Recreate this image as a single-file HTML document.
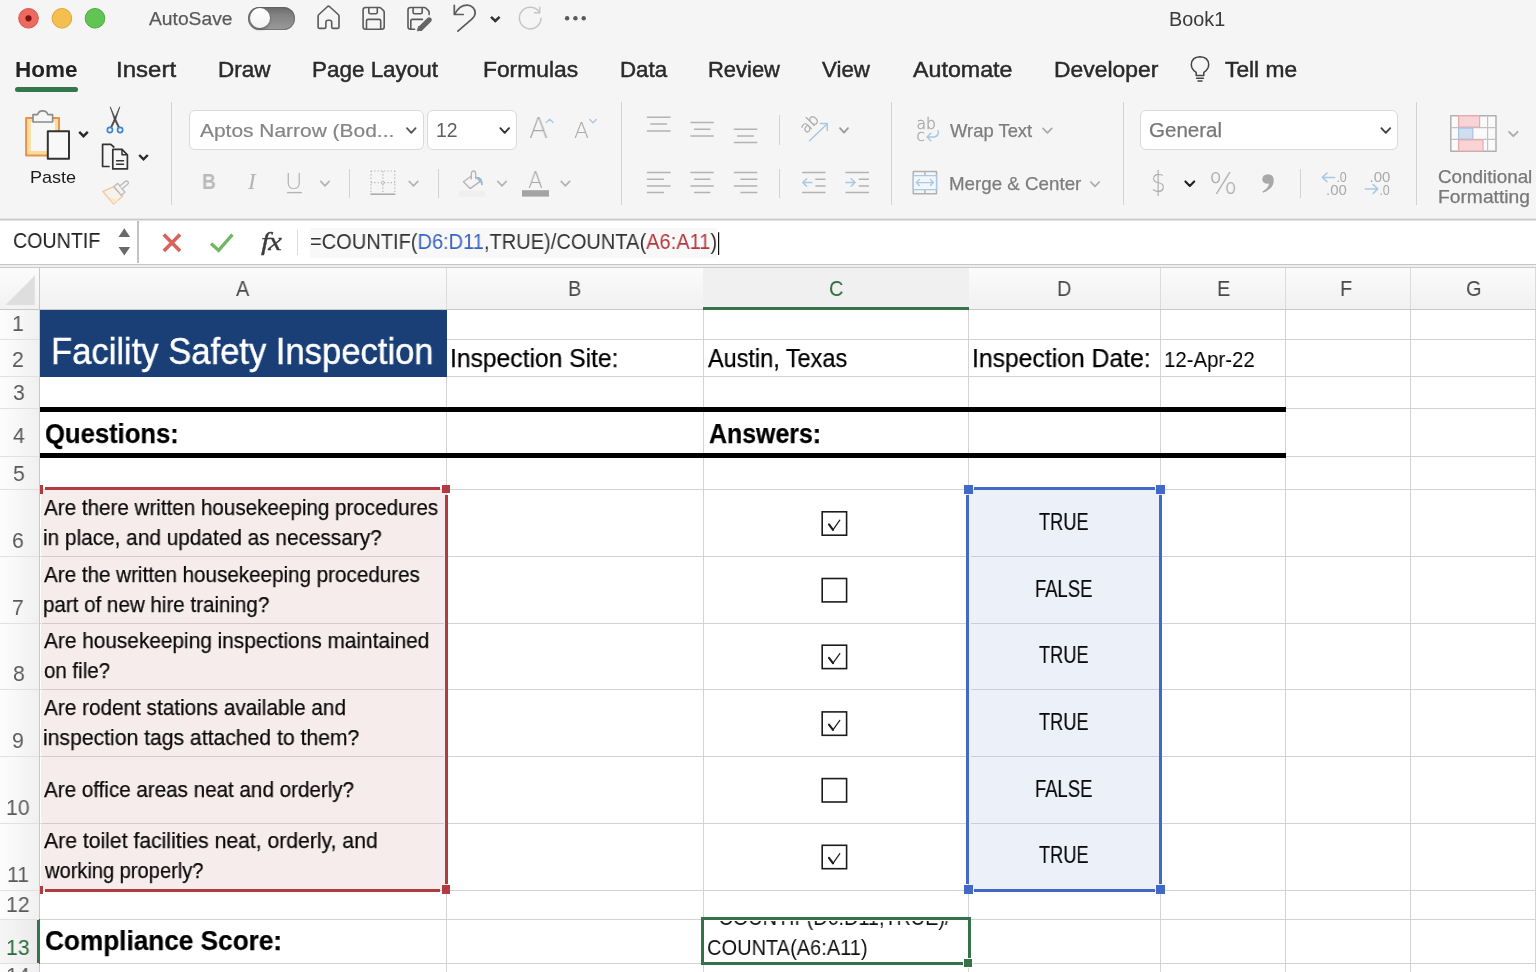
<!DOCTYPE html>
<html lang="en"><head><meta charset="utf-8"><title>Book1</title>
<style>
html,body{margin:0;padding:0;background:#fff;}
body{width:1536px;height:972px;overflow:hidden;font-family:"Liberation Sans",sans-serif;}
#app{position:relative;width:1536px;height:972px;overflow:hidden;background:#fff;}
.t{will-change:transform;position:absolute;white-space:pre;line-height:1;transform-origin:0 0;display:block;}
.t i{font-style:italic;}
.abs{position:absolute;}
.hl{position:absolute;height:1px;background:#d3d3d3;}
.vl{position:absolute;width:1px;background:#d3d3d3;}
.dv{position:absolute;width:1px;background:#d2d2d2;}
svg{position:absolute;overflow:visible;}
.box{position:absolute;background:#fff;border:1px solid #dadada;border-radius:6px;box-sizing:border-box;}
</style></head>
<body>
<div id="app">
<!-- window chrome: title bar + ribbon -->
<div class="abs" style="left:0;top:0;width:1536px;height:219px;background:#f5f5f5"></div>
<div class="abs" style="left:0;top:218px;width:1536px;height:1px;background:#e6e6e6"></div>
<div class="abs" style="left:0;top:219px;width:1536px;height:1px;background:#c9c9c9"></div>
<div class="abs" style="left:0;top:220px;width:1536px;height:1px;background:#e2e2e2;z-index:1"></div>
<!-- traffic lights -->
<svg style="left:0;top:0" width="120" height="40" viewBox="0 0 120 40">
  <circle cx="28.5" cy="18.3" r="9.8" fill="#ec6a5f" stroke="#d9544a" stroke-width="1"/>
  <circle cx="28.5" cy="18.3" r="3.1" fill="#7c1410"/>
  <circle cx="61.9" cy="18.3" r="9.8" fill="#f5bf4f" stroke="#dea63a" stroke-width="1"/>
  <circle cx="95" cy="18.3" r="9.8" fill="#61c554" stroke="#4daa3f" stroke-width="1"/>
</svg>
<!-- autosave toggle -->
<div class="abs" style="left:248.4px;top:6.5px;width:46.8px;height:23.5px;border-radius:12px;background:linear-gradient(#686868,#828282 35%,#9a9a9a);box-shadow:inset 0 0 0 1px rgba(90,90,90,.55)"></div>
<div class="abs" style="left:249.7px;top:7.8px;width:20.6px;height:20.6px;border-radius:50%;background:linear-gradient(#ffffff,#f3f3f3);box-shadow:0 1.5px 2.5px rgba(0,0,0,.35)"></div>
<!-- quick access icons -->
<svg style="left:310px;top:0" width="290" height="40" viewBox="310 0 290 40" fill="none" stroke="#5b5b5b" stroke-width="1.7" stroke-linejoin="round" stroke-linecap="round">
  <!-- home -->
  <path d="M318.1 16.2 Q318.1 15.2 318.9 14.5 L327.6 6.5 Q328.5 5.8 329.4 6.5 L338.2 14.5 Q339 15.2 339 16.2 V26.9 Q339 28.4 337.5 28.4 H333.2 Q331.7 28.4 331.7 26.9 V22.4 Q331.7 20.2 329.5 20.2 H328.1 Q325.9 20.2 325.9 22.4 V26.9 Q325.9 28.4 324.4 28.4 H319.6 Q318.1 28.4 318.1 26.9 Z" stroke-width="1.6"/>
  <!-- save -->
  <path d="M365.6 7.5 H379.4 Q380.4 7.5 381.1 8.2 L383.5 10.6 Q384.2 11.3 384.2 12.3 V26.7 Q384.2 29.2 381.7 29.2 H365.6 Q363.1 29.2 363.1 26.7 V10 Q363.1 7.5 365.6 7.5 Z" stroke-width="1.6"/>
  <path d="M368.8 7.7 V12.2 Q368.8 13.7 370.3 13.7 H375.8 Q377.3 13.7 377.3 12.2 V7.7" stroke-width="1.6"/>
  <path d="M366.5 29 V20.9 Q366.5 19.4 368 19.4 H379.2 Q380.7 19.4 380.7 20.9 V29" stroke-width="1.6"/>
  <!-- save as (edit) -->
  <path d="M414.6 29.2 H410.5 Q408 29.2 408 26.7 V10 Q408 7.5 410.5 7.5 H424.3 Q425.3 7.5 426 8.2 L428.4 10.6 Q429.1 11.3 429.1 12.3 V14.6" stroke-width="1.6"/>
  <path d="M413.1 7.7 V12.2 Q413.1 13.7 414.6 13.7 H420.7 Q422.2 13.7 422.2 12.2 V7.7" stroke-width="1.6"/>
  <path d="M410.8 29 V20.9 Q410.8 19.4 412.3 19.4 H422.4" stroke-width="1.6"/>
  <path d="M429.2 19.9 L420.6 28.3" stroke="#666" stroke-width="5.2"/>
  <path d="M418.6 26.6 L417.3 30.4 Q417.2 31 417.8 30.9 L421.8 29.9 Z" fill="#666" stroke="#666" stroke-width="0.8"/>
  <!-- undo -->
  <path d="M454.3 5.4 V14.5 H463.2" stroke-width="1.7"/>
  <path d="M454.8 14 C457.5 9 462 5.2 467.2 5.2 C472 5.2 475.2 9 475.2 12.8 C475.2 15.6 473.8 17.4 471.8 19.2 L457.9 31.2" stroke-width="1.7"/>
  <!-- chevron -->
  <path d="M491 16.8 L495.3 21 L499.6 16.8" stroke="#333" stroke-width="2.5" stroke-linecap="butt" stroke-linejoin="miter"/>
  <!-- redo (disabled) -->
  <path d="M539.7 7.3 V12.7 H534.4" stroke="#c6c6c6" stroke-width="1.5"/>
  <path d="M539.6 12.7 A10.8 10.8 0 1 0 541 18.3" stroke="#c6c6c6" stroke-width="1.5"/>
  <!-- dots -->
  <g fill="#595959" stroke="none"><circle cx="567.1" cy="18.3" r="2.2"/><circle cx="575.4" cy="18.3" r="2.2"/><circle cx="583.7" cy="18.3" r="2.2"/></g>
</svg>
<!-- Home underline -->
<div class="abs" style="left:15px;top:86.6px;width:63.2px;height:5px;border-radius:2.5px;background:#34774a"></div>
<!-- lightbulb -->
<svg style="left:1185px;top:52px" width="30" height="34" viewBox="1185 52 30 34" fill="none" stroke="#444" stroke-width="1.5" stroke-linecap="round" stroke-linejoin="round">
  <path d="M1196.2 75.4 V72.4 Q1191.3 69.3 1191.3 64.6 Q1191.6 57.2 1200 56.8 Q1208.4 57.2 1208.7 64.6 Q1208.7 69.3 1203.8 72.4 V75.4 Z"/>
  <path d="M1196.6 78.2 H1203.4"/><path d="M1198 81 H1202"/>
</svg>
<!-- ribbon dividers -->
<div class="dv" style="left:170.6px;top:102px;height:103px"></div>
<div class="dv" style="left:621px;top:102px;height:103px"></div>
<div class="dv" style="left:891.4px;top:102px;height:103px"></div>
<div class="dv" style="left:1123.2px;top:102px;height:103px"></div>
<div class="dv" style="left:1416px;top:102px;height:103px"></div>
<div class="dv" style="left:349.2px;top:168.6px;height:29.4px"></div>
<div class="dv" style="left:438px;top:168.6px;height:29.4px"></div>
<div class="dv" style="left:779.4px;top:115.3px;height:29.6px"></div>
<div class="dv" style="left:779.4px;top:168.6px;height:29.4px"></div>
<div class="dv" style="left:1300.2px;top:168.6px;height:29.4px"></div>
<!-- dropdown boxes -->
<div class="box" style="left:188.5px;top:110.2px;width:235px;height:39.4px"></div>
<div class="box" style="left:427px;top:110.2px;width:90px;height:39.4px"></div>
<div class="box" style="left:1140.2px;top:110.2px;width:257.6px;height:39.4px"></div>
<!-- ribbon icons -->
<svg style="left:0;top:95px" width="1536" height="125" viewBox="0 95 1536 125" fill="none" stroke-linecap="round" stroke-linejoin="round">
  <!-- paste clipboard -->
  <path d="M26.1 118 H59 V155.6 H26.1 Z" fill="#f9dc9a" stroke="#e8934a" stroke-width="2"/>
  <path d="M30.8 121.6 H55 V151 H30.8 Z" fill="#f7f7f7" stroke="none"/>
  <path d="M33 122 V114.6 H37.6 Q38.6 110.9 42.7 110.9 Q46.8 110.9 47.8 114.6 H52.6 V122 Z" fill="#f6f6f6" stroke="#8a8a8a" stroke-width="1.6"/>
  <path d="M47.8 131.2 H69 V158.8 H47.8 Z" fill="#f8f8f8" stroke="#333" stroke-width="2"/>
  <path d="M79.2 131.8 L83.5 136.2 L87.8 131.8" stroke="#2a2a2a" stroke-width="2.4" stroke-linecap="butt" stroke-linejoin="miter"/>
  <!-- scissors -->
  <path d="M110.4 107.2 L115.4 118.6 L119.6 127.4 L118.4 127.8 L114.4 119.6 Z" fill="#444" stroke="#444" stroke-width="0.7"/>
  <path d="M119.6 107.2 L114.6 118.6 L110.4 127.4 L111.6 127.8 L115.6 119.6 Z" fill="#444" stroke="#444" stroke-width="0.7"/>
  <circle cx="109.9" cy="130" r="2.6" stroke="#3c86d2" stroke-width="1.7"/>
  <circle cx="120.1" cy="130" r="2.6" stroke="#3c86d2" stroke-width="1.7"/>
  <!-- copy -->
  <path d="M109 166.5 H102.6 V144.4 H110.8 L113.8 147" stroke="#333" stroke-width="1.7"/>
  <path d="M112.8 149.4 H122 L127.4 154.8 V168.9 H112.8 Z" fill="#f7f7f7" stroke="#333" stroke-width="1.7"/>
  <path d="M122 149.6 V154.8 H127.2" stroke="#333" stroke-width="1.5"/>
  <path d="M116.5 160.7 H123.6 M116.5 164.2 H123.6" stroke="#333" stroke-width="1.4"/>
  <path d="M139.2 155 L143.5 159.4 L147.8 155" stroke="#2a2a2a" stroke-width="2.4" stroke-linecap="butt" stroke-linejoin="miter"/>
  <!-- format painter (disabled) -->
  <path d="M102.9 191.5 L113.2 186.8 L122.6 196.3 L113.7 204 Z" fill="#f8f2ed" stroke="#f3c8a6" stroke-width="1.4"/>
  <path d="M108.2 196.6 L118.4 200 L113.7 203.8 Z" fill="#fbe9c8" stroke="none"/>
  <path d="M113.9 186.5 L117.7 183.4 L124.9 192.3 L121.2 195.3 Z" fill="#f4f4f4" stroke="#bcbcbc" stroke-width="1.4"/>
  <path d="M119.9 186 L125.4 181.4 Q126.9 180.4 128 181.7 Q129 183.1 127.7 184.2 L122.2 188.8" fill="#f4f4f4" stroke="#bcbcbc" stroke-width="1.4"/>
  <!-- font box chevrons -->
  <path d="M407 128.2 L411.3 132.8 L415.6 128.2" stroke="#555" stroke-width="1.8"/>
  <path d="M500.4 128.2 L504.7 132.8 L509 128.2" stroke="#333" stroke-width="1.9"/>
  <path d="M1381.4 128.2 L1385.8 132.8 L1390.2 128.2" stroke="#444" stroke-width="1.9"/>
  <!-- grow/shrink carets -->
  <path d="M546.2 122.4 L549.7 119.2 L553.2 122.4" stroke="#a9c8e6" stroke-width="1.4"/>
  <path d="M589.6 119.4 L593 122.8 L596.4 119.4" stroke="#a9c8e6" stroke-width="1.4"/>
  <!-- U underline + chevron -->
  <path d="M287 192.6 H301.9" stroke="#b4b4b4" stroke-width="1.4" stroke-linecap="butt"/>
  <path d="M320.8 181.4 L325 185.8 L329.2 181.4" stroke="#b5b5b5" stroke-width="1.8"/>
  <!-- borders icon -->
  <g stroke="#b5b5b5" stroke-width="1.2" stroke-dasharray="1.2 2.1" stroke-linecap="butt">
    <path d="M371 171 H395"/><path d="M371 171 V193"/><path d="M394.8 171 V193"/><path d="M382.9 171 V193"/><path d="M371 182.6 H395"/>
  </g>
  <path d="M370.4 194.2 H395.3" stroke="#adadad" stroke-width="1.6" stroke-linecap="butt"/>
  <circle cx="382.9" cy="182.6" r="1.5" stroke="#b5b5b5" stroke-width="0.9" fill="#f5f5f5"/>
  <path d="M409.2 181.4 L413.5 185.8 L417.8 181.4" stroke="#b5b5b5" stroke-width="1.8"/>
  <!-- fill bucket -->
  <path d="M471.3 179 V174 Q471.4 171 473.6 171 Q475.7 171 475.7 174 V178.6" stroke="#b5b5b5" stroke-width="1.3"/>
  <path d="M471.2 176.2 L463.4 181.8 L470.2 188.6 L480.2 181.4 L475.8 177" stroke="#b5b5b5" stroke-width="1.4"/>
  <path d="M477.2 177.4 Q482 176.6 482.4 184.6 Q482 186.6 481 182.6 Q480.2 179 477.2 177.4 Z" fill="#8fb4de" stroke="#8fb4de" stroke-width="0.8"/>
  <rect x="459" y="190.6" width="26.2" height="6" fill="#efefef" stroke="none"/>
  <path d="M497.8 181.4 L502 185.8 L506.2 181.4" stroke="#b5b5b5" stroke-width="1.8"/>
  <!-- font colour bar -->
  <rect x="522" y="190.2" width="27" height="6.4" fill="#a3a3a3" stroke="none"/>
  <path d="M561.2 181.4 L565.4 185.8 L569.6 181.4" stroke="#b5b5b5" stroke-width="1.8"/>
  <!-- alignment icons -->
  <g stroke="#b3b3b3" stroke-width="1.5" stroke-linecap="butt">
    <path d="M646.9 117.3 H670.6 M650.3 124.1 H666.9 M646.9 130.9 H670.6"/>
    <path d="M690.4 122.4 H713.8 M694 129.2 H710.4 M690.4 136 H713.8"/>
    <path d="M733.8 129.2 H757.3 M737.1 136 H753.9 M733.8 142.5 H757.3"/>
    <path d="M646.9 172.5 H670.6 M646.9 179.2 H663.9 M646.9 185.9 H670.6 M646.9 192.6 H663.9"/>
    <path d="M690.4 172.5 H713.8 M694 179.2 H710.4 M690.4 185.9 H713.8 M694 192.6 H710.4"/>
    <path d="M733.8 172.5 H757.3 M740.4 179.2 H757.3 M733.8 185.9 H757.3 M740.4 192.6 H757.3"/>
    <path d="M802.1 172.5 H825.5 M815.3 179.2 H825.5 M815.3 185.9 H825.5 M802.1 192.6 H825.5"/>
    <path d="M845.5 172.5 H869 M858.8 179.2 H869 M858.8 185.9 H869 M845.5 192.6 H869"/>
  </g>
  <g stroke="#a9c8e6" stroke-width="1.5">
    <path d="M811.8 182.5 H803 M806.6 178.8 L802.8 182.5 L806.6 186.2"/>
    <path d="M846 182.5 H854.8 M851.2 178.8 L855 182.5 L851.2 186.2"/>
  </g>
  <!-- orientation -->
  <path d="M809.5 140.8 L826.8 124.2 M820.4 123.6 H827.3 V130.6" stroke="#a9c8e6" stroke-width="1.5"/>
  <path d="M840 128.2 L844 132.6 L848 128.2" stroke="#9a9a9a" stroke-width="1.8"/>
  <!-- wrap text -->
  <path d="M938 130.6 Q939.4 135.4 934.6 137 H927.4 M930.8 133.2 L927 137 L930.8 140.8" stroke="#a9c8e6" stroke-width="1.5"/>
  <path d="M1043 128.4 L1047.4 132.8 L1051.8 128.4" stroke="#ababab" stroke-width="1.7"/>
  <!-- merge & center -->
  <rect x="913.3" y="171.4" width="23.2" height="22.4" stroke="#b0b0b0" stroke-width="1.5"/>
  <path d="M924.9 171.4 V175.6 M924.9 189.6 V193.8" stroke="#b0b0b0" stroke-width="1.4" stroke-linecap="butt"/>
  <rect x="913.3" y="175.6" width="23.2" height="14" fill="#f3f7fb" stroke="#a9c8e6" stroke-width="1.4"/>
  <path d="M916.4 182.6 H933.4 M919.4 179.6 L916.4 182.6 L919.4 185.6 M930.4 179.6 L933.4 182.6 L930.4 185.6" stroke="#a9c8e6" stroke-width="1.4"/>
  <path d="M1090.8 182 L1095 186.3 L1099.2 182" stroke="#ababab" stroke-width="1.7"/>
  <!-- currency chevron -->
  <path d="M1185.4 181.4 L1189.8 186 L1194.2 181.4" stroke="#222" stroke-width="2.1"/>
  <!-- comma -->
  <path d="M1268 174.2 Q1273.6 174.4 1273.8 180.4 Q1273.6 188.6 1263 192.8 L1262.4 191.6 Q1268.4 188.4 1269 183.6 Q1262.4 184 1262.2 179.2 Q1262.6 174.4 1268 174.2 Z" fill="#a9a9a9" stroke="none"/>
  <!-- decimals arrows -->
  <path d="M1334.6 177.4 H1322.6 M1327 173 L1322.4 177.4 L1327 181.8" stroke="#a9c8e6" stroke-width="1.5"/>
  <path d="M1365.4 189 H1377.6 M1373.2 184.6 L1377.8 189 L1373.2 193.4" stroke="#a9c8e6" stroke-width="1.5"/>
  <!-- conditional formatting -->
  <rect x="1450.8" y="115.8" width="45.2" height="35.4" fill="#fafafa" stroke="#b0b0b0" stroke-width="1.5"/>
  <path d="M1450.8 127.6 H1496 M1450.8 139.4 H1496 M1458.6 115.8 V151.2 M1487.6 115.8 V151.2" stroke="#c2c2c2" stroke-width="1.2" stroke-linecap="butt"/>
  <rect x="1458.6" y="115.8" width="21" height="11.2" fill="#f8d4d6" stroke="#eaa9ad" stroke-width="1.2"/>
  <rect x="1458.6" y="128.2" width="14.2" height="10.8" fill="#cfdff0" stroke="#a9c3e4" stroke-width="1.2"/>
  <rect x="1458.6" y="139.8" width="24.4" height="11.2" fill="#f8d4d6" stroke="#eaa9ad" stroke-width="1.2"/>
  <path d="M1509 131.8 L1513.3 136.2 L1517.6 131.8" stroke="#ababab" stroke-width="1.8"/>
</svg>
<!-- small glyph labels inside ribbon icons (real text) -->
<svg style="left:790px;top:100px;will-change:transform" width="760" height="110" viewBox="790 100 760 110" font-family="DejaVu Sans, Liberation Sans, sans-serif" font-weight="200" fill="#a6a6a6" stroke="#a6a6a6" stroke-width="0.35">
  <text x="0" y="0" font-size="16" transform="translate(806.2 134) rotate(-45)" textLength="19.5" lengthAdjust="spacingAndGlyphs">ab</text>
  <text x="916.4" y="129" font-size="16.5" textLength="19.5" lengthAdjust="spacingAndGlyphs">ab</text>
  <text x="916.6" y="141.2" font-size="16.5" textLength="8.4" lengthAdjust="spacingAndGlyphs">c</text>
  <text x="1336.4" y="182" font-size="14.4" font-family="Liberation Sans, sans-serif" font-weight="400" stroke="none" fill="#a9a9a9" textLength="10.4" lengthAdjust="spacingAndGlyphs">.0</text>
  <text x="1326" y="194.8" font-size="14.4" font-family="Liberation Sans, sans-serif" font-weight="400" stroke="none" fill="#a9a9a9" textLength="20.8" lengthAdjust="spacingAndGlyphs">.00</text>
  <text x="1369.6" y="182" font-size="14.4" font-family="Liberation Sans, sans-serif" font-weight="400" stroke="none" fill="#a9a9a9" textLength="20.8" lengthAdjust="spacingAndGlyphs">.00</text>
  <text x="1379.4" y="194.8" font-size="14.4" font-family="Liberation Sans, sans-serif" font-weight="400" stroke="none" fill="#a9a9a9" textLength="10.4" lengthAdjust="spacingAndGlyphs">.0</text>
</svg>
<!-- formula bar -->
<div class="abs" style="left:0;top:220px;width:1536px;height:44px;background:#fff"></div>
<div class="abs" style="left:136.6px;top:221px;width:2px;height:42px;background:#c3c3c3"></div>
<div class="abs" style="left:310px;top:227.5px;width:407px;height:30.5px;background:#f8f8f8"></div>
<div class="abs" style="left:297.4px;top:230px;width:1px;height:24.6px;background:#dcdcdc"></div>
<div class="abs" style="left:0;top:264px;width:1536px;height:1px;background:#c6c6c6"></div>
<div class="abs" style="left:0;top:265px;width:1536px;height:2px;background:#efefef"></div>
<div class="abs" style="left:0;top:267px;width:1536px;height:1px;background:#cbcbcb"></div>
<svg style="left:100px;top:220px" width="640" height="44" viewBox="100 220 640 44" fill="none" stroke-linecap="butt">
  <path d="M124.3 228.2 L130.1 236.9 H118.5 Z" fill="#6a6a6a"/>
  <path d="M124.3 255.6 L130.1 246.9 H118.5 Z" fill="#6a6a6a"/>
  <path d="M163.8 234.4 L180 251 M180 234.4 L163.8 251" stroke="#d9625d" stroke-width="3.6"/>
  <path d="M211 243.6 L218.6 250.4 L232.4 234.6" stroke="#6fb85f" stroke-width="3.3"/>
  <path d="M718.6 232.2 V255" stroke="#111" stroke-width="1.2"/>
</svg>
<!-- sheet: headers -->
<div class="abs" style="left:0;top:268px;width:1536px;height:41px;background:linear-gradient(#fbfbfb,#f1f1f1)"></div>
<div class="abs" style="left:0;top:310px;width:39px;height:662px;background:linear-gradient(to right,#fdfdfd,#f0f0f0)"></div>
<div class="abs" style="left:0;top:268px;width:39px;height:41px;background:linear-gradient(#fbfbfb,#f2f2f2)"></div>
<svg style="left:0;top:268px" width="40" height="42" viewBox="0 268 40 42"><path d="M5.6 305 L34.8 275.6 V305 Z" fill="#dedede"/></svg>
<!-- selected column C header -->
<div class="abs" style="left:703px;top:268px;width:266px;height:39px;background:#f0f0f0"></div>
<div class="abs" style="left:703px;top:307px;width:266px;height:3px;background:#36734a"></div>
<!-- selected row 13 header -->
<div class="abs" style="left:0;top:919px;width:37px;height:45px;background:linear-gradient(to right,#f6f6f6,#ebebeb)"></div>
<div class="abs" style="left:37px;top:919px;width:3px;height:45px;background:#36734a"></div>
<!-- header separators -->
<div class="hl" style="left:0;top:309px;width:703px;background:#c9c9c9"></div>
<div class="hl" style="left:969px;top:309px;width:567px;background:#c9c9c9"></div>
<div class="vl" style="left:39px;top:268px;height:651px;background:#c9c9c9"></div>
<div class="vl" style="left:39px;top:964px;height:8px;background:#c9c9c9"></div>
<div class="vl" style="left:446px;top:268px;height:41px;background:#dcdcdc"></div>
<div class="vl" style="left:1160px;top:268px;height:41px;background:#dcdcdc"></div>
<div class="vl" style="left:1285px;top:268px;height:41px;background:#dcdcdc"></div>
<div class="vl" style="left:1410px;top:268px;height:41px;background:#dcdcdc"></div>
<div class="vl" style="left:1535px;top:268px;height:41px;background:#dcdcdc"></div>
<!-- row header separators -->
<div class="hl" style="left:0;top:339px;width:39px;background:#e0e0e0"></div>
<div class="hl" style="left:0;top:376px;width:39px;background:#e0e0e0"></div>
<div class="hl" style="left:0;top:408px;width:39px;background:#e0e0e0"></div>
<div class="hl" style="left:0;top:456px;width:39px;background:#e0e0e0"></div>
<div class="hl" style="left:0;top:489px;width:39px;background:#e0e0e0"></div>
<div class="hl" style="left:0;top:556px;width:39px;background:#e0e0e0"></div>
<div class="hl" style="left:0;top:623px;width:39px;background:#e0e0e0"></div>
<div class="hl" style="left:0;top:689px;width:39px;background:#e0e0e0"></div>
<div class="hl" style="left:0;top:756px;width:39px;background:#e0e0e0"></div>
<div class="hl" style="left:0;top:823px;width:39px;background:#e0e0e0"></div>
<div class="hl" style="left:0;top:890px;width:39px;background:#e0e0e0"></div>
<div class="hl" style="left:0;top:919px;width:39px;background:#e0e0e0"></div>
<div class="hl" style="left:0;top:963px;width:39px;background:#e0e0e0"></div>
<!-- cell grid lines -->
<div class="hl" style="left:447px;top:339px;width:1089px"></div>
<div class="hl" style="left:447px;top:376px;width:1089px"></div>
<div class="hl" style="left:40px;top:376px;width:407px"></div>
<div class="hl" style="left:1286px;top:408px;width:250px"></div>
<div class="hl" style="left:1286px;top:456px;width:250px"></div>
<div class="hl" style="left:40px;top:489px;width:1496px"></div>
<div class="hl" style="left:40px;top:556px;width:1496px"></div>
<div class="hl" style="left:40px;top:623px;width:1496px"></div>
<div class="hl" style="left:40px;top:689px;width:1496px"></div>
<div class="hl" style="left:40px;top:756px;width:1496px"></div>
<div class="hl" style="left:40px;top:823px;width:1496px"></div>
<div class="hl" style="left:40px;top:890px;width:1496px"></div>
<div class="hl" style="left:40px;top:919px;width:1496px"></div>
<div class="hl" style="left:40px;top:963px;width:1496px"></div>
<div class="vl" style="left:446px;top:376px;height:596px"></div>
<div class="vl" style="left:703px;top:310px;height:662px"></div>
<div class="vl" style="left:968px;top:310px;height:662px"></div>
<div class="vl" style="left:1160px;top:310px;height:662px"></div>
<div class="vl" style="left:1285px;top:310px;height:662px"></div>
<div class="vl" style="left:1410px;top:310px;height:662px"></div>
<div class="vl" style="left:1535px;top:310px;height:662px"></div>
<!-- title banner -->
<div class="abs" style="left:40px;top:310px;width:407px;height:66.6px;background:#1a3f77"></div>
<!-- thick rules -->
<div class="abs" style="left:40px;top:406.8px;width:1246px;height:5px;background:#000"></div>
<div class="abs" style="left:40px;top:453.4px;width:1246px;height:5px;background:#000"></div>
<!-- referenced range A6:A11 (red) -->
<div class="abs" style="left:41px;top:490px;width:405px;height:399px;background:#f7ecec"></div>
<div class="hl" style="left:42px;top:556px;width:402px;background:#d5caca"></div>
<div class="hl" style="left:42px;top:623px;width:402px;background:#d5caca"></div>
<div class="hl" style="left:42px;top:689px;width:402px;background:#d5caca"></div>
<div class="hl" style="left:42px;top:756px;width:402px;background:#d5caca"></div>
<div class="hl" style="left:42px;top:823px;width:402px;background:#d5caca"></div>
<div class="abs" style="left:44.6px;top:487px;width:395px;height:3px;background:#b23a41"></div>
<div class="abs" style="left:44.6px;top:888.6px;width:395px;height:3px;background:#b23a41"></div>
<div class="abs" style="left:444.8px;top:494.6px;width:3px;height:389.6px;background:#b23a41"></div>
<div class="abs" style="left:40px;top:485.4px;width:3.4px;height:8.2px;background:#b23a41"></div>
<div class="abs" style="left:40px;top:885.8px;width:3.4px;height:8.2px;background:#b23a41"></div>
<div class="abs" style="left:441.6px;top:484.8px;width:8.6px;height:8.6px;background:#b23a41"></div>
<div class="abs" style="left:441.6px;top:885.4px;width:8.6px;height:8.6px;background:#b23a41"></div>
<!-- referenced range D6:D11 (blue) -->
<div class="abs" style="left:969px;top:490px;width:191px;height:399px;background:#ecf0f9"></div>
<div class="hl" style="left:971px;top:556px;width:188px;background:#c9cedb"></div>
<div class="hl" style="left:971px;top:623px;width:188px;background:#c9cedb"></div>
<div class="hl" style="left:971px;top:689px;width:188px;background:#c9cedb"></div>
<div class="hl" style="left:971px;top:756px;width:188px;background:#c9cedb"></div>
<div class="hl" style="left:971px;top:823px;width:188px;background:#c9cedb"></div>
<div class="abs" style="left:974.2px;top:487px;width:180.6px;height:3px;background:#4169c5"></div>
<div class="abs" style="left:974.2px;top:888.6px;width:180.6px;height:3px;background:#4169c5"></div>
<div class="abs" style="left:966px;top:494.8px;width:3.2px;height:389.4px;background:#4169c5"></div>
<div class="abs" style="left:1159px;top:494.8px;width:3.2px;height:389.4px;background:#4169c5"></div>
<div class="abs" style="left:964px;top:485.2px;width:8.5px;height:8.5px;background:#4169c5"></div>
<div class="abs" style="left:1156.2px;top:485.2px;width:8.5px;height:8.5px;background:#4169c5"></div>
<div class="abs" style="left:964px;top:885.2px;width:8.5px;height:8.5px;background:#4169c5"></div>
<div class="abs" style="left:1156.2px;top:885.2px;width:8.5px;height:8.5px;background:#4169c5"></div>
<!-- checkboxes -->
<svg style="left:815px;top:500px" width="40" height="380" viewBox="815 500 40 380" fill="none">
  <g stroke="#1c1c1c" stroke-width="1.6" fill="#fff">
    <rect x="822.2" y="511.8" width="24.4" height="23.4"/>
    <rect x="822.2" y="578.5" width="24.4" height="23.4"/>
    <rect x="822.2" y="645.2" width="24.4" height="23.4"/>
    <rect x="822.2" y="711.9" width="24.4" height="23.4"/>
    <rect x="822.2" y="778.6" width="24.4" height="23.4"/>
    <rect x="822.2" y="845.3" width="24.4" height="23.4"/>
  </g>
  <g stroke="#1c1c1c" stroke-linecap="round" stroke-linejoin="round">
    <path d="M829 524.4 L833 529.8" stroke-width="2.1"/>
    <path d="M833 529.8 L839.8 520.2" stroke-width="1.2"/>
    <path d="M829 657.8 L833 663.2" stroke-width="2.1"/><path d="M833 663.2 L839.8 653.6" stroke-width="1.2"/>
    <path d="M829 724.5 L833 729.9" stroke-width="2.1"/><path d="M833 729.9 L839.8 720.3" stroke-width="1.2"/>
    <path d="M829 857.9 L833 863.3" stroke-width="2.1"/><path d="M833 863.3 L839.8 853.7" stroke-width="1.2"/>
  </g>
</svg>
<!-- active cell C13 -->
<div class="abs" style="left:701px;top:917px;width:270px;height:48px;box-sizing:border-box;border:3px solid #34724a;background:#fff"></div>
<div class="abs" style="left:962.8px;top:957.6px;width:10px;height:10px;background:#fff"></div>
<div class="abs" style="left:964.2px;top:959px;width:7.8px;height:7.6px;background:#36734a"></div>
<!-- text labels -->
<span class="t" id="t0" style='left:149.00px;top:9.41px;font-size:19.25px;color:#5a5a5a;transform:scaleX(0.9992);-webkit-text-stroke:0.25px #5a5a5a;'>AutoSave</span>
<span class="t" id="t1" style='left:1169.20px;top:10.01px;font-size:19.77px;color:#3a3a3a;transform:scaleX(1.0027);'>Book1</span>
<span class="t" id="t2" style='left:14.95px;top:60.01px;font-size:21.44px;color:#222;font-weight:700;transform:scaleX(1.0488);'>Home</span>
<span class="t" id="t3" style='left:115.88px;top:60.01px;font-size:21.44px;color:#2a2a2a;transform:scaleX(1.1204);-webkit-text-stroke:0.45px #2a2a2a;'>Insert</span>
<span class="t" id="t4" style='left:217.95px;top:60.01px;font-size:21.44px;color:#2a2a2a;transform:scaleX(1.0496);-webkit-text-stroke:0.45px #2a2a2a;'>Draw</span>
<span class="t" id="t5" style='left:312.25px;top:60.01px;font-size:21.44px;color:#2a2a2a;transform:scaleX(1.0466);-webkit-text-stroke:0.45px #2a2a2a;'>Page Layout</span>
<span class="t" id="t6" style='left:482.69px;top:60.01px;font-size:21.44px;color:#2a2a2a;transform:scaleX(1.0642);-webkit-text-stroke:0.45px #2a2a2a;'>Formulas</span>
<span class="t" id="t7" style='left:620.46px;top:60.01px;font-size:21.44px;color:#2a2a2a;transform:scaleX(1.0415);-webkit-text-stroke:0.45px #2a2a2a;'>Data</span>
<span class="t" id="t8" style='left:707.73px;top:60.01px;font-size:21.44px;color:#2a2a2a;transform:scaleX(1.0235);-webkit-text-stroke:0.45px #2a2a2a;'>Review</span>
<span class="t" id="t9" style='left:821.90px;top:60.01px;font-size:21.44px;color:#2a2a2a;transform:scaleX(1.0408);-webkit-text-stroke:0.45px #2a2a2a;'>View</span>
<span class="t" id="t10" style='left:913.10px;top:60.01px;font-size:21.44px;color:#2a2a2a;transform:scaleX(1.0844);-webkit-text-stroke:0.45px #2a2a2a;'>Automate</span>
<span class="t" id="t11" style='left:1054.23px;top:60.01px;font-size:21.44px;color:#2a2a2a;transform:scaleX(1.0676);-webkit-text-stroke:0.45px #2a2a2a;'>Developer</span>
<span class="t" id="t12" style='left:1225.40px;top:60.01px;font-size:21.44px;color:#2a2a2a;transform:scaleX(1.0615);-webkit-text-stroke:0.45px #2a2a2a;'>Tell me</span>
<span class="t" id="t13" style='left:29.84px;top:170.11px;font-size:16.96px;color:#1a1a1a;transform:scaleX(1.0647);'>Paste</span>
<span class="t" id="t14" style='left:199.50px;top:121.50px;font-size:18.94px;color:#858585;transform:scaleX(1.1054);-webkit-text-stroke:0.2px #858585;'>Aptos Narrow (Bod...</span>
<span class="t" id="t15" style='left:436.40px;top:120.50px;font-size:19.36px;color:#606060;transform:scaleX(1.0017);'>12</span>
<span class="t" id="t16" style='left:202.02px;top:170.91px;font-size:21.85px;color:#b9b9b9;font-weight:700;transform:scaleX(0.8786);'>B</span>
<span class="t" id="t17" style='left:247.91px;top:169.91px;font-size:23px;color:#b4b4b4;font-family:"Liberation Serif", serif;font-style:italic;transform:scaleX(1.0100);'>I</span>
<span class="t" id="t18" style='left:285.32px;top:171.71px;font-size:21px;color:#b4b4b4;font-weight:200;font-family:"DejaVu Sans", "Liberation Sans", sans-serif;transform:scaleX(1.1417);'>U</span>
<span class="t" id="t19" style='left:528.70px;top:114.21px;font-size:29px;color:#ababab;font-weight:200;font-family:"DejaVu Sans", "Liberation Sans", sans-serif;transform:scaleX(0.9632);'>A</span>
<span class="t" id="t20" style='left:574.40px;top:120.21px;font-size:22px;color:#ababab;font-weight:200;font-family:"DejaVu Sans", "Liberation Sans", sans-serif;transform:scaleX(0.9933);'>A</span>
<span class="t" id="t21" style='left:528.30px;top:169.10px;font-size:23.5px;color:#ababab;font-weight:200;font-family:"DejaVu Sans", "Liberation Sans", sans-serif;transform:scaleX(0.9313);'>A</span>
<span class="t" id="t22" style='left:949.70px;top:122.51px;font-size:17.69px;color:#7d7d7d;transform:scaleX(1.0406);-webkit-text-stroke:0.25px #7d7d7d;'>Wrap Text</span>
<span class="t" id="t23" style='left:948.64px;top:176.10px;font-size:17.69px;color:#7d7d7d;transform:scaleX(1.0600);-webkit-text-stroke:0.25px #7d7d7d;'>Merge &amp; Center</span>
<span class="t" id="t24" style='left:1149.46px;top:120.51px;font-size:19.77px;color:#787878;transform:scaleX(1.0388);-webkit-text-stroke:0.25px #787878;'>General</span>
<span class="t" id="t25" style='left:1151.41px;top:168.30px;font-size:29px;color:#adadad;font-weight:200;font-family:"DejaVu Sans", "Liberation Sans", sans-serif;transform:scaleX(0.7933);'>$</span>
<span class="t" id="t26" style='left:1209.12px;top:169.21px;font-size:30px;color:#adadad;font-weight:200;font-family:"DejaVu Sans", "Liberation Sans", sans-serif;transform:scaleX(0.9920);'>%</span>
<span class="t" id="t27" style='left:1437.50px;top:169.30px;font-size:17.69px;color:#787878;transform:scaleX(1.0655);-webkit-text-stroke:0.25px #787878;'>Conditional</span>
<span class="t" id="t28" style='left:1438.11px;top:189.01px;font-size:17.69px;color:#787878;transform:scaleX(1.0883);-webkit-text-stroke:0.25px #787878;'>Formatting</span>
<span class="t" id="t29" style='left:12.84px;top:231.11px;font-size:21.54px;color:#222;transform:scaleX(0.9124);'>COUNTIF</span>
<span class="t" id="t30" style='left:260.50px;top:228.52px;font-size:25.5px;color:#3c3c3c;font-family:"Liberation Serif", serif;font-style:italic;transform:scaleX(1.2052);-webkit-text-stroke:0.35px #3c3c3c;'><i>f</i><i style="margin-left:-1px">x</i></span>
<span class="t" id="t31" style='left:310.32px;top:232.31px;font-size:21.44px;color:#333;transform:scaleX(0.9350);'>=COUNTIF(<span style="color:#3a63c4">D6:D11</span>,TRUE)/COUNTA(<span style="color:#b5373c">A6:A11</span>)</span>
<span class="t" id="t32" style='left:236.05px;top:278.30px;font-size:21.23px;color:#4a4a4a;transform:scaleX(0.9400);'>A</span>
<span class="t" id="t33" style='left:567.95px;top:278.30px;font-size:21.23px;color:#4a4a4a;transform:scaleX(0.9400);'>B</span>
<span class="t" id="t34" style='left:1056.68px;top:278.30px;font-size:21.23px;color:#4a4a4a;transform:scaleX(0.9400);'>D</span>
<span class="t" id="t35" style='left:1216.65px;top:278.30px;font-size:21.23px;color:#4a4a4a;transform:scaleX(0.9400);'>E</span>
<span class="t" id="t36" style='left:1340.12px;top:278.30px;font-size:21.23px;color:#4a4a4a;transform:scaleX(0.9400);'>F</span>
<span class="t" id="t37" style='left:1466.08px;top:278.30px;font-size:21.23px;color:#4a4a4a;transform:scaleX(0.9400);'>G</span>
<span class="t" id="t38" style='left:828.78px;top:278.30px;font-size:21.23px;color:#276b3c;transform:scaleX(0.9400);'>C</span>
<span class="t" id="t39" style='left:12.09px;top:313.31px;font-size:21.85px;color:#5a5a5a;transform:scaleX(0.9700);'>1</span>
<span class="t" id="t40" style='left:12.09px;top:348.72px;font-size:21.85px;color:#5a5a5a;transform:scaleX(0.9700);'>2</span>
<span class="t" id="t41" style='left:12.58px;top:382.00px;font-size:21.85px;color:#5a5a5a;transform:scaleX(0.9700);'>3</span>
<span class="t" id="t42" style='left:12.58px;top:425.00px;font-size:21.85px;color:#5a5a5a;transform:scaleX(0.9700);'>4</span>
<span class="t" id="t43" style='left:12.58px;top:463.31px;font-size:21.85px;color:#5a5a5a;transform:scaleX(0.9700);'>5</span>
<span class="t" id="t44" style='left:12.09px;top:529.50px;font-size:21.85px;color:#5a5a5a;transform:scaleX(0.9700);'>6</span>
<span class="t" id="t45" style='left:12.09px;top:596.50px;font-size:21.85px;color:#5a5a5a;transform:scaleX(0.9700);'>7</span>
<span class="t" id="t46" style='left:12.58px;top:663.00px;font-size:21.85px;color:#5a5a5a;transform:scaleX(0.9700);'>8</span>
<span class="t" id="t47" style='left:12.09px;top:730.31px;font-size:21.85px;color:#5a5a5a;transform:scaleX(0.9700);'>9</span>
<span class="t" id="t48" style='left:6.20px;top:797.00px;font-size:21.85px;color:#5a5a5a;transform:scaleX(0.9700);'>10</span>
<span class="t" id="t49" style='left:6.99px;top:863.72px;font-size:21.85px;color:#5a5a5a;transform:scaleX(0.9700);'>11</span>
<span class="t" id="t50" style='left:6.20px;top:893.72px;font-size:21.85px;color:#5a5a5a;transform:scaleX(0.9700);'>12</span>
<span class="t" id="t51" style='left:6.20px;top:965.00px;font-size:21.85px;color:#5a5a5a;transform:scaleX(0.9700);'>14</span>
<span class="t" id="t52" style='left:6.20px;top:937.00px;font-size:21.85px;color:#276b3c;transform:scaleX(0.9700);'>13</span>
<span class="t" id="t53" style='left:51.13px;top:332.71px;font-size:37.47px;color:#fff;transform:scaleX(0.9231);-webkit-text-stroke:0.45px #fff;'>Facility Safety Inspection</span>
<span class="t" id="t54" style='left:449.64px;top:345.71px;font-size:25.18px;color:#000;transform:scaleX(0.9791);-webkit-text-stroke:0.25px #000;'>Inspection Site:</span>
<span class="t" id="t55" style='left:707.70px;top:345.71px;font-size:25.18px;color:#000;transform:scaleX(0.9322);-webkit-text-stroke:0.25px #000;'>Austin, Texas</span>
<span class="t" id="t56" style='left:971.64px;top:345.71px;font-size:25.18px;color:#000;transform:scaleX(0.9819);-webkit-text-stroke:0.25px #000;'>Inspection Date:</span>
<span class="t" id="t57" style='left:1164.09px;top:348.91px;font-size:22.48px;color:#000;transform:scaleX(0.9074);'>12-Apr-22</span>
<span class="t" id="t58" style='left:45.19px;top:420.31px;font-size:28.1px;color:#000;font-weight:700;transform:scaleX(0.9123);-webkit-text-stroke:0.25px #000;'>Questions:</span>
<span class="t" id="t59" style='left:709.30px;top:420.31px;font-size:28.1px;color:#000;font-weight:700;transform:scaleX(0.8863);-webkit-text-stroke:0.25px #000;'>Answers:</span>
<span class="t" id="t60" style='left:44.00px;top:496.80px;font-size:21.65px;color:#0a0a0a;transform:scaleX(0.9524);-webkit-text-stroke:0.25px #0a0a0a;'>Are there written housekeeping procedures</span>
<span class="t" id="t61" style='left:43.04px;top:526.52px;font-size:21.65px;color:#0a0a0a;transform:scaleX(0.9608);-webkit-text-stroke:0.25px #0a0a0a;'>in place, and updated as necessary?</span>
<span class="t" id="t62" style='left:44.00px;top:563.61px;font-size:21.65px;color:#0a0a0a;transform:scaleX(0.9525);-webkit-text-stroke:0.25px #0a0a0a;'>Are the written housekeeping procedures</span>
<span class="t" id="t63" style='left:43.05px;top:593.61px;font-size:21.65px;color:#0a0a0a;transform:scaleX(0.9500);-webkit-text-stroke:0.25px #0a0a0a;'>part of new hire training?</span>
<span class="t" id="t64" style='left:44.00px;top:630.21px;font-size:21.65px;color:#0a0a0a;transform:scaleX(0.9618);-webkit-text-stroke:0.25px #0a0a0a;'>Are housekeeping inspections maintained</span>
<span class="t" id="t65" style='left:44.00px;top:659.80px;font-size:21.65px;color:#0a0a0a;transform:scaleX(0.9463);-webkit-text-stroke:0.25px #0a0a0a;'>on file?</span>
<span class="t" id="t66" style='left:44.00px;top:697.02px;font-size:21.65px;color:#0a0a0a;transform:scaleX(0.9581);-webkit-text-stroke:0.25px #0a0a0a;'>Are rodent stations available and</span>
<span class="t" id="t67" style='left:43.02px;top:727.02px;font-size:21.65px;color:#0a0a0a;transform:scaleX(0.9774);-webkit-text-stroke:0.25px #0a0a0a;'>inspection tags attached to them?</span>
<span class="t" id="t68" style='left:44.00px;top:778.71px;font-size:21.65px;color:#0a0a0a;transform:scaleX(0.9522);-webkit-text-stroke:0.25px #0a0a0a;'>Are office areas neat and orderly?</span>
<span class="t" id="t69" style='left:44.00px;top:830.30px;font-size:21.65px;color:#0a0a0a;transform:scaleX(0.9780);-webkit-text-stroke:0.25px #0a0a0a;'>Are toilet facilities neat, orderly, and</span>
<span class="t" id="t70" style='left:44.93px;top:859.80px;font-size:21.65px;color:#0a0a0a;transform:scaleX(0.9274);-webkit-text-stroke:0.25px #0a0a0a;'>working properly?</span>
<span class="t" id="t71" style='left:1039.10px;top:511.01px;font-size:23.0px;color:#0a0a0a;transform:scaleX(0.7917);-webkit-text-stroke:0.2px #0a0a0a;'>TRUE</span>
<span class="t" id="t72" style='left:1035.20px;top:577.69px;font-size:23.0px;color:#0a0a0a;transform:scaleX(0.8014);-webkit-text-stroke:0.2px #0a0a0a;'>FALSE</span>
<span class="t" id="t73" style='left:1039.10px;top:644.38px;font-size:23.0px;color:#0a0a0a;transform:scaleX(0.7917);-webkit-text-stroke:0.2px #0a0a0a;'>TRUE</span>
<span class="t" id="t74" style='left:1039.10px;top:711.05px;font-size:23.0px;color:#0a0a0a;transform:scaleX(0.7917);-webkit-text-stroke:0.2px #0a0a0a;'>TRUE</span>
<span class="t" id="t75" style='left:1035.20px;top:777.72px;font-size:23.0px;color:#0a0a0a;transform:scaleX(0.8014);-webkit-text-stroke:0.2px #0a0a0a;'>FALSE</span>
<span class="t" id="t76" style='left:1039.10px;top:844.41px;font-size:23.0px;color:#0a0a0a;transform:scaleX(0.7917);-webkit-text-stroke:0.2px #0a0a0a;'>TRUE</span>
<span class="t" id="t77" style='left:45.47px;top:927.01px;font-size:28.1px;color:#000;font-weight:700;transform:scaleX(0.9318);-webkit-text-stroke:0.25px #000;'>Compliance Score:</span>
<span class="t" id="t78" style='left:707.37px;top:937.90px;font-size:21.44px;color:#111;transform:scaleX(0.9341);'>COUNTA(A6:A11)</span>
<div style="position:absolute;left:704px;top:920.6px;width:264px;height:41.39999999999998px;overflow:hidden"><span class="t" id="t79" style='left:3.38px;top:-12.31px;font-size:21.44px;color:#111;transform:scaleX(0.9243);'>=COUNTIF(D6:D11,TRUE)/</span></div>
</div>
</body></html>
